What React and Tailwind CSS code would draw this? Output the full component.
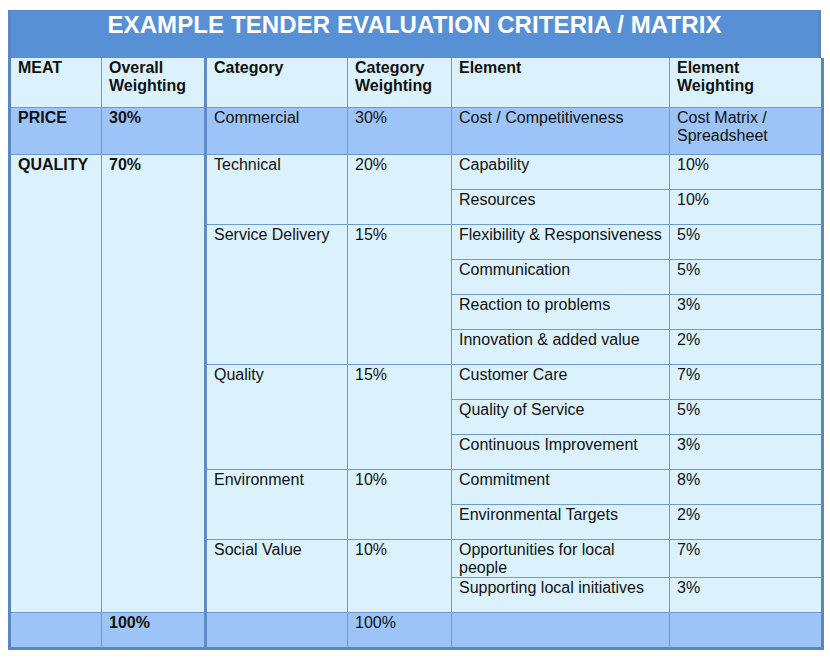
import React from 'react';

const LIGHT = 'bg-[#dbf2fd]';
const DARK = 'bg-[#9cc4f7]';
const cell = 'border border-[#6f9ad1] align-top pl-[7px] pr-[2px] pt-[1px]';
const thick = 'border-r-[3px] border-r-[#5f8bc8]';

const rows = [
  { cat: 'Technical', catW: '20%', span: 2, el: 'Capability', w: '10%' },
  { el: 'Resources', w: '10%' },
  { cat: 'Service Delivery', catW: '15%', span: 4, el: 'Flexibility & Responsiveness', w: '5%' },
  { el: 'Communication', w: '5%' },
  { el: 'Reaction to problems', w: '3%' },
  { el: 'Innovation & added value', w: '2%' },
  { cat: 'Quality', catW: '15%', span: 3, el: 'Customer Care', w: '7%' },
  { el: 'Quality of Service', w: '5%' },
  { el: 'Continuous Improvement', w: '3%' },
  { cat: 'Environment', catW: '10%', span: 2, el: 'Commitment', w: '8%' },
  { el: 'Environmental Targets', w: '2%' },
  { cat: 'Social Value', catW: '10%', span: 2, el: <>Opportunities for local<br />people</>, w: '7%', h: 'h-[38px]' },
  { el: 'Supporting local initiatives', w: '3%' },
];

export default function App() {
  return (
    <div className="w-[830px] h-[660px] bg-white pl-[8px] pt-[10px] font-['Liberation_Sans',Arial,sans-serif] text-[16px] leading-[18px] text-[#111]">
      <div className="w-[813px]">
        {/* title bar */}
        <div className="h-[48px] bg-[#5890d6] border-t border-x-[3px] border-[#5b86c3] text-center text-white font-bold text-[24px] leading-[28px] tracking-[0.1px]">
          EXAMPLE TENDER EVALUATION CRITERIA / MATRIX
        </div>

        <table className="w-[813px] table-fixed border-collapse border-x-[3px] border-b-[3px] border-[#5b86c3]">
          <colgroup>
            <col className="w-[92px]" />
            <col className="w-[104px]" />
            <col className="w-[142px]" />
            <col className="w-[104px]" />
            <col className="w-[218px]" />
            <col className="w-[153px]" />
          </colgroup>
          <tbody>
            <tr className={`h-[49px] ${LIGHT} font-bold`}>
              <td className={`${cell} border-t-0`}>MEAT</td>
              <td className={`${cell} border-t-0 ${thick}`}>Overall<br />Weighting</td>
              <td className={`${cell} border-t-0`}>Category</td>
              <td className={`${cell} border-t-0`}>Category<br />Weighting</td>
              <td className={`${cell} border-t-0`}>Element</td>
              <td className={`${cell} border-t-0`}>Element<br />Weighting</td>
            </tr>

            <tr className={`h-[47px] ${DARK}`}>
              <td className={`${cell} font-bold`}>PRICE</td>
              <td className={`${cell} font-bold ${thick}`}>30%</td>
              <td className={cell}>Commercial</td>
              <td className={cell}>30%</td>
              <td className={cell}>Cost / Competitiveness</td>
              <td className={cell}>Cost Matrix /<br />Spreadsheet</td>
            </tr>

            {rows.map((r, i) => (
              <tr key={i} className={`${r.h || 'h-[35px]'} ${LIGHT}`}>
                {i === 0 && (
                  <>
                    <td rowSpan={rows.length} className={`${cell} font-bold`}>QUALITY</td>
                    <td rowSpan={rows.length} className={`${cell} font-bold ${thick}`}>70%</td>
                  </>
                )}
                {r.cat && (
                  <>
                    <td rowSpan={r.span} className={cell}>{r.cat}</td>
                    <td rowSpan={r.span} className={cell}>{r.catW}</td>
                  </>
                )}
                <td className={`${cell} whitespace-nowrap`}>{r.el}</td>
                <td className={cell}>{r.w}</td>
              </tr>
            ))}

            <tr className={`h-[36px] ${DARK}`}>
              <td className={cell}></td>
              <td className={`${cell} font-bold ${thick}`}>100%</td>
              <td className={cell}></td>
              <td className={cell}>100%</td>
              <td className={cell}></td>
              <td className={cell}></td>
            </tr>
          </tbody>
        </table>
      </div>
    </div>
  );
}
